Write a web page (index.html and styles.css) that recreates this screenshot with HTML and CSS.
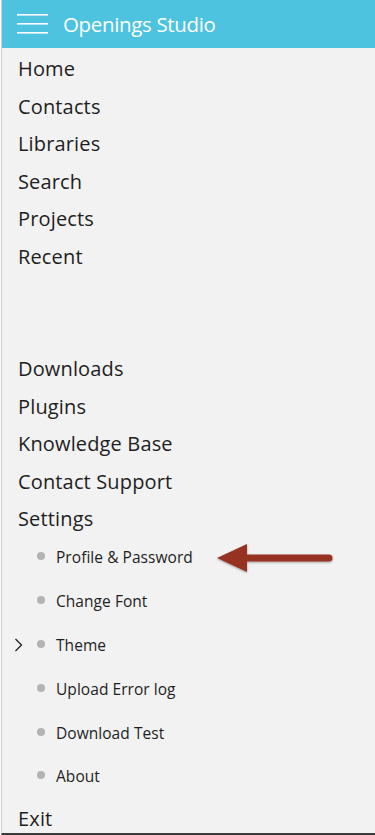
FILE: index.html
```html
<!DOCTYPE html>
<html>
<head>
<meta charset="utf-8">
<link rel="stylesheet" href="styles.css">
</head>
<body>
<div class="app">
  <header class="topbar">
    <svg class="burger" width="31" height="22" viewBox="0 0 31 22">
      <rect x="0" y="0" width="31" height="1.6" fill="#fff"/>
      <rect x="0" y="9" width="31" height="1.6" fill="#fff"/>
      <rect x="0" y="18" width="31" height="1.6" fill="#fff"/>
    </svg>
    <span class="title">Openings Studio</span>
  </header>
  <nav class="menu">
    <div class="item">Home</div>
    <div class="item">Contacts</div>
    <div class="item">Libraries</div>
    <div class="item">Search</div>
    <div class="item">Projects</div>
    <div class="item">Recent</div>
    <div class="spacer"></div>
    <div class="item">Downloads</div>
    <div class="item">Plugins</div>
    <div class="item">Knowledge Base</div>
    <div class="item">Contact Support</div>
    <div class="item">Settings</div>
    <div class="sub">
      <div class="subitem"><span class="caret"></span><span class="dot"></span><span>Profile &amp; Password</span>
        <svg class="arrow" width="120" height="34" viewBox="0 0 120 34">
          <defs>
            <filter id="sh" x="-10%" y="-30%" width="120%" height="160%">
              <feGaussianBlur in="SourceAlpha" stdDeviation="1.2"/>
              <feOffset dx="0" dy="1" result="b"/>
              <feComponentTransfer><feFuncA type="linear" slope="0.35"/></feComponentTransfer>
              <feMerge><feMergeNode/><feMergeNode in="SourceGraphic"/></feMerge>
            </filter>
          </defs>
          <g filter="url(#sh)">
            <path d="M1 17 L31 3 L31 31 Z" fill="#963122"/>
            <line x1="29" y1="17" x2="113" y2="17" stroke="#963122" stroke-width="7" stroke-linecap="round"/>
          </g>
        </svg>
      </div>
      <div class="subitem"><span class="caret"></span><span class="dot"></span><span>Change Font</span></div>
      <div class="subitem"><span class="caret"><svg width="9" height="14" viewBox="0 0 9 14"><path d="M1.5 1 L7.5 7 L1.5 13" fill="none" stroke="#222" stroke-width="1.3"/></svg></span><span class="dot"></span><span>Theme</span></div>
      <div class="subitem"><span class="caret"></span><span class="dot"></span><span>Upload Error log</span></div>
      <div class="subitem"><span class="caret"></span><span class="dot"></span><span>Download Test</span></div>
      <div class="subitem"><span class="caret"></span><span class="dot"></span><span>About</span></div>
    </div>
    <div class="item">Exit</div>
  </nav>
</div>
</body>
</html>
```
FILE: styles.css
```css
html, body {
  margin: 0;
  padding: 0;
  background: #fbfbfb;
}
body {
  padding-left: 1px;
  font-family: "Open Sans", "Noto Sans", sans-serif;
}
.app {
  box-sizing: border-box;
  height: 835px;
  border-left: 1px solid #cfcfcf;
  border-bottom: 2px solid #3a3a3a;
  background: #f2f2f2;
  overflow: hidden;
}
.topbar {
  height: 48px;
  background: #4dc3e0;
  display: flex;
  align-items: center;
  margin-left: -1px;
  padding-left: 16px;
}
.burger {
  display: block;
  margin-top: 1px;
}
.title {
  color: #fff;
  font-size: 20.5px;
  margin-left: 15px;
  letter-spacing: -0.35px;
}
.menu {
  padding-top: 2px;
  display: flex;
  flex-direction: column;
}
.item {
  height: 37.5px;
  line-height: 37.5px;
  padding-left: 16px;
  font-size: 20px;
  color: #1e1e22;
  letter-spacing: 0.15px;
}
.spacer {
  height: 75px;
}
.sub {
  margin-top: -2px;
  margin-bottom: 2px;
}
.subitem {
  height: 43.8px;
  display: flex;
  align-items: center;
  font-size: 15.5px;
  color: #1e1e22;
  letter-spacing: 0.05px;
  position: relative;
}
.caret {
  width: 35px;
  padding-left: 12px;
  box-sizing: border-box;
  display: flex;
  align-items: center;
}
.caret svg {
  display: block;
}
.dot {
  width: 8px;
  height: 8px;
  border-radius: 50%;
  background: #b3b3b3;
  margin-right: 11px;
  margin-top: -2px;
}
.arrow {
  position: absolute;
  left: 214px;
  top: 5px;
}
```
